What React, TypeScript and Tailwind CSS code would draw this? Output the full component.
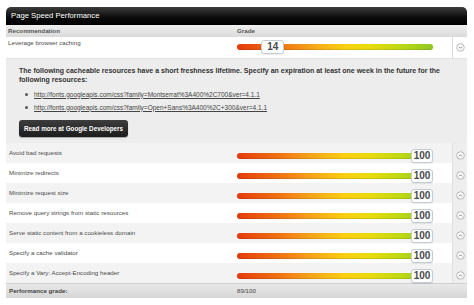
import React from 'react';

const rules = [
  'Avoid bad requests',
  'Minimize redirects',
  'Minimize request size',
  'Remove query strings from static resources',
  'Serve static content from a cookieless domain',
  'Specify a cache validator',
  'Specify a Vary: Accept-Encoding header',
];

function Chevron({ up }: { up?: boolean }) {
  return (
    <svg width="9" height="9" viewBox="0 0 9 9">
      <circle cx="4.5" cy="4.5" r="3.8" fill="#fafafa" stroke="#a8a8a8" strokeWidth="0.8" />
      {up ? (
        <polyline points="3,5.3 4.5,3.8 6,5.3" fill="none" stroke="#777" strokeWidth="0.9" />
      ) : (
        <polyline points="3,3.8 4.5,5.3 6,3.8" fill="none" stroke="#777" strokeWidth="0.9" />
      )}
    </svg>
  );
}

function GradeBar({ value }: { value: number }) {
  const badgeW = value >= 100 ? 22 : 23;
  return (
    <div className="relative w-[196px] h-[14px] flex items-center">
      <div className="w-full h-[6px] rounded-full bg-[linear-gradient(to_right,#e63b0b_0%,#f07414_22%,#f7a91a_40%,#f9cf12_55%,#e9dc0c_68%,#bcd816_84%,#8ec91f_100%)] shadow-[inset_0_-1px_1px_rgba(0,0,0,0.12)]" />
      <div
        className="absolute top-0 h-[14px] flex items-center justify-center bg-white border border-[#c3ccd4] rounded-[3px] text-[10px] leading-none font-bold text-[#4a4a4a] shadow-[0_1px_1px_rgba(0,0,0,0.08)]"
        style={{ left: (value / 100) * (196 - badgeW), width: badgeW }}
      >
        {value}
      </div>
    </div>
  );
}

export default function App() {
  return (
    <div className="w-[474px] h-[305px] bg-white pt-[7px] pl-[6px] font-['Liberation_Sans',Arial,sans-serif] text-[#4a4a4a]">
      <div className="w-[461px]">
        {/* title bar */}
        <div className="h-[18px] rounded-t-[5px] bg-[linear-gradient(to_bottom,#3c3c3c,#0a0a0a_60%,#000)] flex items-center pl-[5px] text-white text-[7.7px]">
          Page Speed Performance
        </div>

        {/* column heads */}
        <div className="h-[12px] flex items-center bg-[linear-gradient(to_bottom,#f0f0f0,#dadada)] text-[6.2px] font-bold text-[#555]">
          <div className="w-[229px] pl-[2px]">Recommendation</div>
          <div className="flex-1 pl-[2px]">Grade</div>
        </div>

        {/* expanded rule */}
        <div className="h-[21px] flex bg-white">
          <div className="w-[229px] pl-[2px] pt-[2px] text-[6.2px] leading-[8px]">Leverage browser caching</div>
          <div className="w-[217px] pl-[2px] pt-[3px]">
            <GradeBar value={14} />
          </div>
          <div className="w-[15px] border-l border-[#dcdcdc] flex justify-center pt-[6px]">
            <Chevron />
          </div>
        </div>

        <div className="h-[85px] bg-[#ededed] border-t border-[#e2e2e2] pl-[13px] pt-[7px] text-[#333]">
          <p className="text-[7px] leading-[9px] font-bold whitespace-nowrap">
            The following cacheable resources have a short freshness lifetime. Specify an expiration at least one week in the future for the
            <br />
            following resources:
          </p>
          <ul className="mt-[4px] text-[6.5px]">
            <li className="h-[13px] flex items-center pl-[6px] gap-[6px]">
              <span className="w-[3px] h-[3px] rounded-full bg-[#555]" />
              <a href="#" className="underline text-[#444]">http://fonts.googleapis.com/css?family=Montserrat%3A400%2C700&amp;ver=4.1.1</a>
            </li>
            <li className="h-[13px] flex items-center pl-[6px] gap-[6px]">
              <span className="w-[3px] h-[3px] rounded-full bg-[#555]" />
              <a href="#" className="underline text-[#444]">http://fonts.googleapis.com/css?family=Open+Sans%3A400%2C+300&amp;ver=4.1.1</a>
            </li>
          </ul>
          <button className="mt-[4px] h-[17px] px-[5px] rounded-[3px] bg-[linear-gradient(to_bottom,#3d3d3d,#1c1c1c)] text-white text-[6.3px] font-bold shadow-[0_1px_1px_rgba(0,0,0,0.3)]">
            Read more at Google Developers
          </button>
        </div>

        {/* passing rules */}
        {rules.map((r, i) => (
          <div key={r} className={`h-[20px] flex ${i % 2 === 0 ? 'bg-[#f3f3f3]' : 'bg-white'}`}>
            <div className="w-[229px] pl-[3px] pt-[6px] text-[6.2px] leading-[8px]">{r}</div>
            <div className="w-[217px] pl-[2px] pt-[6px]">
              <GradeBar value={100} />
            </div>
            <div className="w-[15px] bg-[#eeeeee] border-l border-[#e0e0e0] flex justify-center pt-[8px]">
              <Chevron up />
            </div>
          </div>
        ))}

        {/* total */}
        <div className="h-[15px] flex items-center border-t border-[#cfcfcf] bg-[linear-gradient(to_bottom,#e9e9e9,#d6d6d6)] text-[6.2px]">
          <div className="w-[229px] pl-[3px] font-bold text-[#444]">Performance grade:</div>
          <div className="flex-1 pl-[2px] text-[#444]">89/100</div>
        </div>
      </div>
    </div>
  );
}
